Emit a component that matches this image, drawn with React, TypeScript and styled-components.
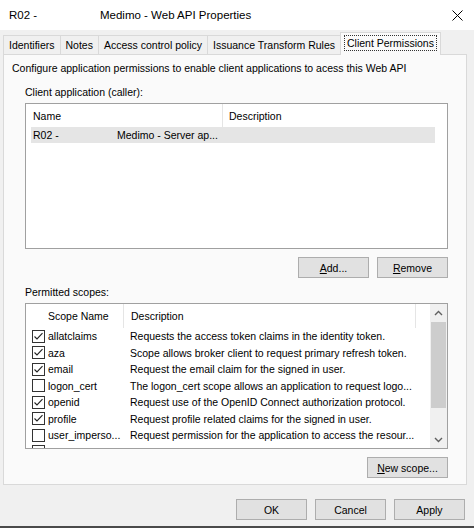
import styled, { createGlobalStyle } from 'styled-components'

const GlobalStyle = createGlobalStyle`
  html, body {
    margin: 0;
    padding: 0;
    background: #f0f0f0;
  }
  body {
    font-family: "Liberation Sans", Arial, sans-serif;
    font-size: 10.5px;
    color: #000;
  }
`

const Window = styled.div`
  width: 474px;
  height: 528px;
  box-sizing: border-box;
  background: #f0f0f0;
  border-bottom: 2px solid #4a4a4a;
  display: flex;
  flex-direction: column;
  overflow: hidden;
`

const TitleBar = styled.div`
  height: 30px;
  flex-shrink: 0;
  background: #fff;
  display: flex;
  align-items: center;
  padding: 0 11px 0 9px;
  font-size: 11.5px;
`

const TitleId = styled.span`
  width: 91px;
`

const TitleText = styled.span`
  flex: 1;
`

const Body = styled.div`
  padding: 2px 7px 0 3px;
  display: flex;
  flex-direction: column;
`

const TabStrip = styled.div`
  display: flex;
  align-items: flex-end;
  height: 23px;
  margin-bottom: -1px;
  position: relative;
  z-index: 1;
`

const Tab = styled.div<{ $active?: boolean }>`
  box-sizing: border-box;
  height: ${p => (p.$active ? 23 : 20)}px;
  padding: ${p => (p.$active ? '0 3px 2px' : '0 5px')};
  margin-left: ${p => (p.$active ? -1 : 0)}px;
  border: 1px solid #d9d9d9;
  border-left: ${p => (p.$active ? '1px solid #d9d9d9' : 'none')};
  border-bottom: ${p => (p.$active ? 'none' : '1px solid #d9d9d9')};
  background: ${p => (p.$active ? '#fafafa' : '#f0f0f0')};
  display: flex;
  align-items: center;
  white-space: nowrap;

  &:first-child {
    border-left: 1px solid #d9d9d9;
  }
`

const FocusLabel = styled.span`
  border: 1px dotted #333;
  padding: 0 2px;
  line-height: 14px;
`

const Panel = styled.div`
  height: 431px;
  box-sizing: border-box;
  border: 1px solid #d9d9d9;
  background: #fafafa;
  padding: 6px 18px 0 8px;
  display: flex;
  flex-direction: column;
`

const Intro = styled.div`
  line-height: 14px;
  white-space: nowrap;
`

const Section = styled.div`
  margin-left: 13px;
  display: flex;
  flex-direction: column;
`

const Label = styled.div<{ $top: number }>`
  margin-top: ${p => p.$top}px;
  line-height: 14px;
`

const ListBox = styled.div`
  margin-top: 4px;
  height: 146px;
  box-sizing: border-box;
  border: 1px solid #a0a0a0;
  background: #fff;
  padding: 0 12px 0 5px;
  overflow: hidden;
`

const ClientRow = styled.div<{ $header?: boolean; $selected?: boolean }>`
  display: grid;
  grid-template-columns: 191px 1fr;
  height: ${p => (p.$header ? 23 : 16)}px;
  background: ${p => (p.$selected ? '#e5e5e5' : 'transparent')};
  align-items: center;
`

const ClientCell = styled.div<{ $divider?: boolean }>`
  height: 100%;
  display: flex;
  align-items: center;
  padding-left: ${p => (p.$divider ? 6 : 2)}px;
  border-left: ${p => (p.$divider ? '1px solid #e5e5e5' : 'none')};
  white-space: nowrap;
`

const ClientName = styled.span`
  width: 84px;
  flex-shrink: 0;
`

const ButtonRow = styled.div<{ $top: number }>`
  margin-top: ${p => p.$top}px;
  display: flex;
  justify-content: flex-end;
  gap: 8px;
`

const Button = styled.button<{ $w?: number }>`
  width: ${p => p.$w ?? 71}px;
  height: 21px;
  box-sizing: border-box;
  border: 1px solid #adadad;
  background: #e1e1e1;
  color: #000;
  font: inherit;
  padding: 0;
`

const ScopeBox = styled.div`
  margin-top: 4px;
  height: 146px;
  box-sizing: border-box;
  border: 1px solid #a0a0a0;
  background: #fff;
  display: flex;
  overflow: hidden;
`

const ScopeContent = styled.div`
  flex: 1;
  min-width: 0;
  overflow: hidden;
`

const ScopeRow = styled.div<{ $header?: boolean }>`
  display: grid;
  grid-template-columns: 97px 293px;
  height: ${p => (p.$header ? 24 : 16.5)}px;
  align-items: center;
`

const NameCell = styled.div<{ $header?: boolean }>`
  display: flex;
  align-items: center;
  gap: 3px;
  height: 100%;
  padding-left: ${p => (p.$header ? 22 : 6)}px;
  overflow: hidden;
  white-space: nowrap;
`

const DescCell = styled.div<{ $header?: boolean }>`
  height: 100%;
  display: flex;
  align-items: center;
  padding-left: 7px;
  border-left: ${p => (p.$header ? '1px solid #e5e5e5' : 'none')};
  border-right: ${p => (p.$header ? '1px solid #e5e5e5' : 'none')};
  white-space: nowrap;
  overflow: hidden;
`

const Scrollbar = styled.div`
  width: 17px;
  flex-shrink: 0;
  background: #f0f0f0;
  display: flex;
  flex-direction: column;
`

const ScrollArrow = styled.div`
  height: 17px;
  display: flex;
  align-items: center;
  justify-content: center;
`

const ScrollTrack = styled.div`
  flex: 1;
  padding: 1px 1px;
`

const ScrollThumb = styled.div`
  height: 86px;
  background: #cdcdcd;
`

const Footer = styled.div`
  display: flex;
  justify-content: flex-end;
  gap: 8px;
  padding: 14px 2px 0 0;
`

const Check = ({ checked }: { checked: boolean }) => (
  <svg width="13" height="13" viewBox="0 0 13 13" style={{ flexShrink: 0 }}>
    <rect x="0.5" y="0.5" width="12" height="12" fill="#fff" stroke="#333" />
    {checked && <path d="M2.5 6.5 L5 9 L10.5 3.2" fill="none" stroke="#222" strokeWidth="1.1" />}
  </svg>
)

const Chevron = ({ up }: { up?: boolean }) => (
  <svg width="9" height="6" viewBox="0 0 9 6">
    <path d={up ? 'M1 5 L4.5 1.5 L8 5' : 'M1 1 L4.5 4.5 L8 1'} fill="none" stroke="#606060" strokeWidth="1.4" />
  </svg>
)

const CloseIcon = () => (
  <svg width="11" height="11" viewBox="0 0 11 11">
    <path d="M0.5 0.5 L10.5 10.5 M10.5 0.5 L0.5 10.5" stroke="#000" strokeWidth="1" />
  </svg>
)

const tabs = ['Identifiers', 'Notes', 'Access control policy', 'Issuance Transform Rules', 'Client Permissions']

const scopes = [
  { name: 'allatclaims', checked: true, desc: 'Requests the access token claims in the identity token.' },
  { name: 'aza', checked: true, desc: 'Scope allows broker client to request primary refresh token.' },
  { name: 'email', checked: true, desc: 'Request the email claim for the signed in user.' },
  { name: 'logon_cert', checked: false, desc: 'The logon_cert scope allows an application to request logo...' },
  { name: 'openid', checked: true, desc: 'Request use of the OpenID Connect authorization protocol.' },
  { name: 'profile', checked: true, desc: 'Request profile related claims for the signed in user.' },
  { name: 'user_imperso...', checked: false, desc: 'Request permission for the application to access the resour...' },
  { name: 'vpn_cert', checked: false, desc: 'The vpn_cert scope allows an application to request VPN...' },
]

export default function App() {
  return (
    <>
      <GlobalStyle />
      <Window>
        <TitleBar>
          <TitleId>R02 -</TitleId>
          <TitleText>Medimo - Web API Properties</TitleText>
          <CloseIcon />
        </TitleBar>
        <Body>
          <TabStrip>
            {tabs.map((t, i) =>
              i === tabs.length - 1 ? (
                <Tab key={t} $active>
                  <FocusLabel>{t}</FocusLabel>
                </Tab>
              ) : (
                <Tab key={t}>{t}</Tab>
              )
            )}
          </TabStrip>
          <Panel>
            <Intro>Configure application permissions to enable client applications to acess this Web API</Intro>
            <Section>
              <Label $top={10}>Client application (caller):</Label>
              <ListBox>
                <ClientRow $header>
                  <ClientCell>Name</ClientCell>
                  <ClientCell $divider>Description</ClientCell>
                </ClientRow>
                <ClientRow $selected>
                  <ClientCell>
                    <ClientName>R02 -</ClientName>
                    Medimo - Server ap...
                  </ClientCell>
                  <ClientCell />
                </ClientRow>
              </ListBox>
              <ButtonRow $top={8}>
                <Button><u>A</u>dd...</Button>
                <Button><u>R</u>emove</Button>
              </ButtonRow>
              <Label $top={7}>Permitted scopes:</Label>
              <ScopeBox>
                <ScopeContent>
                  <ScopeRow $header>
                    <NameCell $header>Scope Name</NameCell>
                    <DescCell $header>Description</DescCell>
                  </ScopeRow>
                  {scopes.map(s => (
                    <ScopeRow key={s.name}>
                      <NameCell>
                        <Check checked={s.checked} />
                        {s.name}
                      </NameCell>
                      <DescCell>{s.desc}</DescCell>
                    </ScopeRow>
                  ))}
                </ScopeContent>
                <Scrollbar>
                  <ScrollArrow><Chevron up /></ScrollArrow>
                  <ScrollTrack><ScrollThumb /></ScrollTrack>
                  <ScrollArrow><Chevron /></ScrollArrow>
                </Scrollbar>
              </ScopeBox>
              <ButtonRow $top={8}>
                <Button $w={81}><u>N</u>ew scope...</Button>
              </ButtonRow>
            </Section>
          </Panel>
          <Footer>
            <Button>OK</Button>
            <Button>Cancel</Button>
            <Button>Apply</Button>
          </Footer>
        </Body>
      </Window>
    </>
  )
}
